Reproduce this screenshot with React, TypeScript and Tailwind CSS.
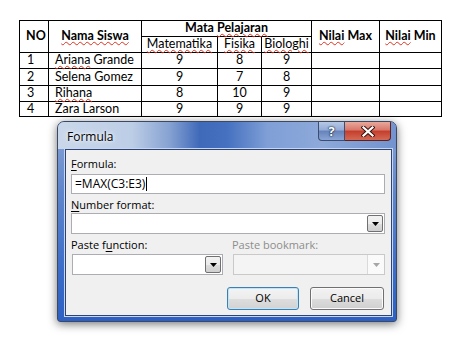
import type { ReactNode } from 'react';

const squiggle = 'underline decoration-wavy decoration-[#e0301e] decoration-[1px] underline-offset-[1px]';

const students = [
  { no: '1', name: 'Ariana Grande', flag: 'Ariana', rest: ' Grande', m: '9', f: '8', b: '9' },
  { no: '2', name: 'Selena Gomez', m: '9', f: '7', b: '8' },
  { no: '3', name: 'Rihana', flag: 'Rihana', rest: '', m: '8', f: '10', b: '9' },
  { no: '4', name: 'Zara Larson', m: '9', f: '9', b: '9' },
];

function Cell({ className = '', children }: { className?: string; children?: ReactNode }) {
  return <div className={`flex items-center border-r border-b border-black ${className}`}>{children}</div>;
}

function DropArrow({ disabled = false }: { disabled?: boolean }) {
  return (
    <svg width="7" height="4" viewBox="0 0 7 4">
      <path d="M0 0h7L3.5 4z" fill={disabled ? '#a6a6a6' : '#000'} />
    </svg>
  );
}

function Combo({ className = '', disabled = false }: { className?: string; disabled?: boolean }) {
  if (disabled) {
    return (
      <div className={`flex justify-end border border-[#c9c9c9] bg-[#f4f4f4] ${className}`}>
        <div className="flex w-[17px] items-center justify-center border-l border-[#dadada] bg-[#fafafa]">
          <DropArrow disabled />
        </div>
      </div>
    );
  }
  return (
    <div className={`flex justify-end border border-[#abadb3] bg-white p-px ${className}`}>
      <div className="flex w-[16px] items-center justify-center rounded-[2px] border border-[#707070] bg-[linear-gradient(#f2f2f2,#ebebeb_50%,#dddddd_51%,#cfcfcf)]">
        <DropArrow />
      </div>
    </div>
  );
}

export default function App() {
  return (
    <div className="flex h-[340px] w-[464px] flex-col overflow-hidden bg-white">
      {/* worksheet table */}
      <div className="ml-[19px] mt-[20px] grid w-[423px] grid-cols-[29px_93px_76px_44px_50px_68px_62px] grid-rows-[16px_16px_16px_17px_16px_15px] border-l border-t border-black font-['Lato',sans-serif] text-[12.5px] leading-none text-black">
        <Cell className="row-span-2 pl-[6px] font-bold">NO</Cell>
        <Cell className="row-span-2 justify-center font-bold">
          <span className={squiggle}>Nama Siswa</span>
        </Cell>
        <Cell className="col-span-3 justify-center font-bold">
          Mata&nbsp;<span className={squiggle}>Pelajaran</span>
        </Cell>
        <Cell className="row-span-2 justify-center font-bold">
          <span className={squiggle}>Nilai</span>&nbsp;Max
        </Cell>
        <Cell className="row-span-2 justify-center font-bold">
          <span className={squiggle}>Nilai</span>&nbsp;Min
        </Cell>
        <Cell className="justify-center">
          <span className={squiggle}>Matematika</span>
        </Cell>
        <Cell className="justify-center">
          <span className={squiggle}>Fisika</span>
        </Cell>
        <Cell className="justify-center">
          <span className={squiggle}>Biologhi</span>
        </Cell>
        {students.map((s) => (
          <div key={s.no} className="contents">
            <Cell className="pl-[7px]">{s.no}</Cell>
            <Cell className="pl-[6px]">
              {s.flag ? (
                <>
                  <span className={squiggle}>{s.flag}</span>
                  {s.rest && <span className="whitespace-pre">{s.rest}</span>}
                </>
              ) : (
                s.name
              )}
            </Cell>
            <Cell className="justify-center">{s.m}</Cell>
            <Cell className="justify-center">{s.f}</Cell>
            <Cell className="justify-center">{s.b}</Cell>
            <Cell />
            <Cell />
          </div>
        ))}
      </div>

      {/* Formula dialog */}
      <div className="ml-[57px] mt-[4px] flex h-[201px] w-[340px] flex-col overflow-hidden rounded-t-[7px] rounded-b-[3px] border border-[#3a4a66] bg-[linear-gradient(180deg,#8aa5d6,#5f86cb_35%,#3a6cc8_75%,#2d60c2)] font-['Open_Sans',sans-serif] text-[11px] text-black shadow-[0_2px_10px_rgba(0,0,0,0.55)]">
        <div className="flex h-[27px] shrink-0 items-start justify-between bg-[linear-gradient(90deg,#cad7ea,#bccde6_22%,#86a2d2_33%,#3f69b9_42%,#4571c0_50%,#7f9fd6_62%,#8ea9da_78%,#7293cf)]">
          <span className="mt-[6px] pl-[9px] text-[12px] [text-shadow:0_0_6px_#ffffff,0_0_3px_#ffffff]">Formula</span>
          <div className="mr-[5px] flex">
            <div className="flex h-[19px] w-[27px] items-center justify-center rounded-bl-[4px] border border-t-0 border-[#3b4d70] bg-[linear-gradient(180deg,#b7c8e6,#93abd6_45%,#6583bb_50%,#8aa4d4)] text-[13px] font-bold leading-none text-white [text-shadow:0_0_1px_#1d2b45,0_0_1px_#1d2b45,0_0_2px_#1d2b45]">
              ?
            </div>
            <div className="flex h-[19px] w-[46px] items-center justify-center rounded-br-[4px] border border-l-0 border-t-0 border-[#5b2320] bg-[linear-gradient(180deg,#e8a89c,#d7776a_45%,#c43d2b_50%,#d36a55)]">
              <svg width="14" height="11" viewBox="0 0 14 11">
                <path d="M2.5 1.5l9 8M11.5 1.5l-9 8" stroke="#3b1512" strokeWidth="4.2" strokeLinecap="square" />
                <path d="M2.5 1.5l9 8M11.5 1.5l-9 8" stroke="#ffffff" strokeWidth="2.2" strokeLinecap="square" />
              </svg>
            </div>
          </div>
        </div>

        <div className="mb-[5px] ml-[7px] mr-[4px] flex flex-1 flex-col border border-[#2a4478] bg-[#f0f0f0] pl-[5px] pr-[6px] shadow-[0_0_0_1px_#c9d6ee]">
          <div className="mt-[6px] h-[15px] leading-[15px]">
            <span className="underline underline-offset-2">F</span>ormula:
          </div>
          <div className="mt-[3px] flex h-[20px] items-center border border-[#abadb3] bg-white pl-[3px] text-[12px]">
            =MAX(C3:E3)
            <span className="ml-px h-[14px] w-px bg-black" />
          </div>
          <div className="mt-[3px] h-[15px] leading-[15px]">
            <span className="underline underline-offset-2">N</span>umber format:
          </div>
          <Combo className="mt-px h-[21px]" />
          <div className="mt-[3px] flex h-[15px] leading-[15px]">
            <div className="w-[161px]">
              Paste f<span className="underline underline-offset-2">u</span>nction:
            </div>
            <div className="text-[#8d8d8d]">Paste bookmark:</div>
          </div>
          <div className="mt-[2px] flex gap-[10px]">
            <Combo className="ml-px h-[21px] w-[151px]" />
            <Combo disabled className="h-[21px] w-[152px]" />
          </div>
          <div className="mt-[12px] flex justify-end gap-[11px] pr-px">
            <div className="flex h-[23px] w-[72px] items-center justify-center rounded-[3px] border border-[#3c7fb1] bg-[linear-gradient(180deg,#f4f4f4,#ececec_50%,#dedede_51%,#d2d2d2)] shadow-[inset_0_0_0_1px_#bfe6f8]">
              OK
            </div>
            <div className="flex h-[23px] w-[74px] items-center justify-center rounded-[3px] border border-[#707070] bg-[linear-gradient(180deg,#f2f2f2,#ebebeb_50%,#dddddd_51%,#cfcfcf)] shadow-[inset_0_0_0_1px_#fbfbfb]">
              Cancel
            </div>
          </div>
        </div>
      </div>
    </div>
  );
}
